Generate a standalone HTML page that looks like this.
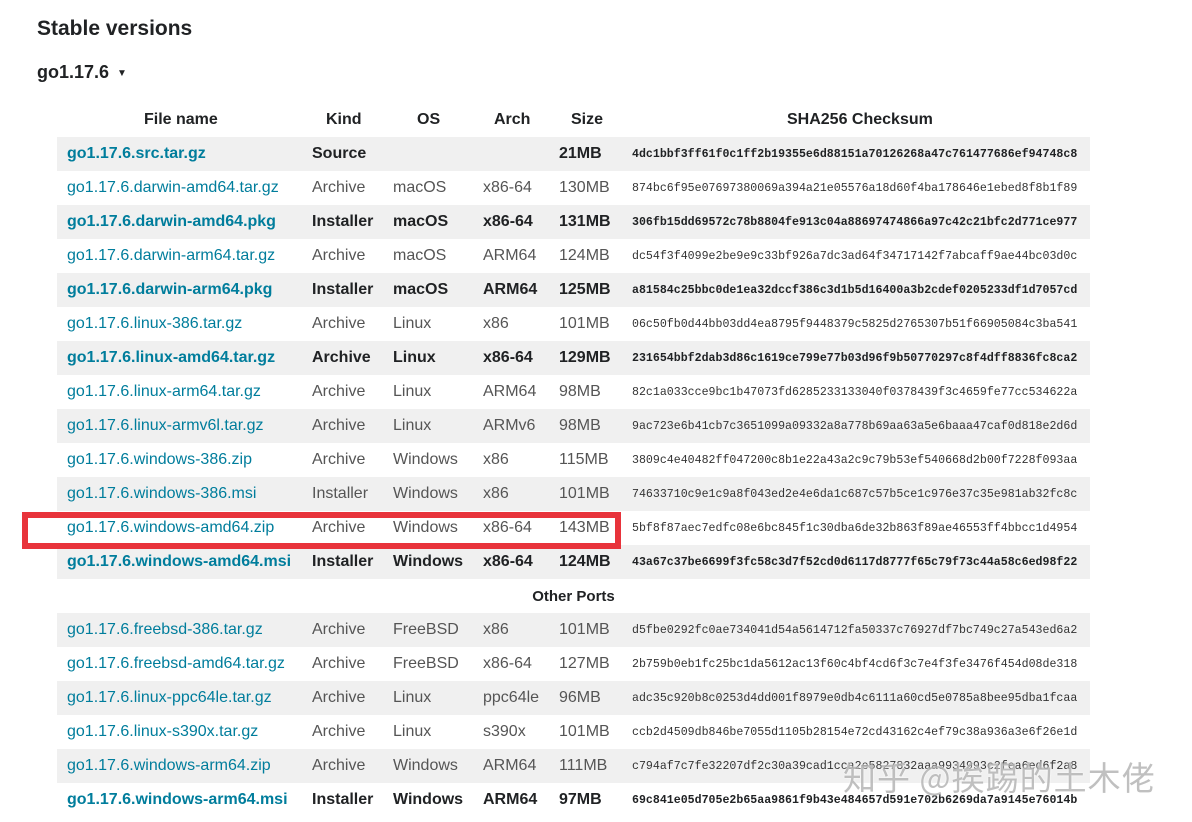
<!DOCTYPE html>
<html><head><meta charset="utf-8"><style>
body{margin:0;background:#fff;width:1192px;height:822px;overflow:hidden;position:relative;font-family:"Liberation Sans","DejaVu Sans",sans-serif;color:#202224}
h2{position:absolute;left:37px;top:17px;margin:0;font-size:21px;font-weight:bold;color:#202224}
h3{position:absolute;left:37px;top:62px;margin:0;font-size:18px;font-weight:bold}
h3 span{font-size:10px;margin-left:8px;vertical-align:2px}
table{position:absolute;left:57px;top:102px;border-collapse:collapse;width:1033px;table-layout:fixed}
td,th{height:34px;padding:0;font-size:16px;white-space:nowrap;overflow:visible}
th{font-weight:bold;text-align:left;color:#202224}
tr.h th{height:35px}
td{color:#555}
.f{padding-left:10px;width:245px}
td.f{color:#007d9c}
.k{width:81px}.o{width:90px}.a{width:76px}.s{width:73px}
td.c{font-family:"Liberation Mono",monospace;font-size:11.6px;color:#333}
tr.sh td{background:#f0f0f0}
tr.b td{font-weight:bold;color:#202224}
tr.b td.f{color:#007d9c}
tr.b td.c{color:#202224}
tr.op td{text-align:center;font-weight:bold;color:#202224;font-size:15px}
.red{position:absolute;left:22px;top:512px;width:587px;height:25px;border:6px solid #e8333b}
.wm{position:absolute;left:843px;top:752px;font-family:"Noto Sans CJK SC",sans-serif;font-size:33px;color:rgba(140,140,140,0.55);letter-spacing:1px;text-shadow:0 0 2px #fff}
</style></head><body>
<h2>Stable versions</h2>
<h3>go1.17.6<span>▼</span></h3>
<table>
<colgroup><col style="width:255px"><col style="width:81px"><col style="width:90px"><col style="width:76px"><col style="width:73px"><col></colgroup>
<tr class="h"><th style="padding-left:87px">File name</th><th style="padding-left:14px">Kind</th><th style="padding-left:24px">OS</th><th style="padding-left:11px">Arch</th><th style="padding-left:12px">Size</th><th style="padding-left:155px">SHA256 Checksum</th></tr>
<tr class="sh b"><td class="f">go1.17.6.src.tar.gz</td><td class="k">Source</td><td class="o"></td><td class="a"></td><td class="s">21MB</td><td class="c">4dc1bbf3ff61f0c1ff2b19355e6d88151a70126268a47c761477686ef94748c8</td></tr>
<tr><td class="f">go1.17.6.darwin-amd64.tar.gz</td><td class="k">Archive</td><td class="o">macOS</td><td class="a">x86-64</td><td class="s">130MB</td><td class="c">874bc6f95e07697380069a394a21e05576a18d60f4ba178646e1ebed8f8b1f89</td></tr>
<tr class="sh b"><td class="f">go1.17.6.darwin-amd64.pkg</td><td class="k">Installer</td><td class="o">macOS</td><td class="a">x86-64</td><td class="s">131MB</td><td class="c">306fb15dd69572c78b8804fe913c04a88697474866a97c42c21bfc2d771ce977</td></tr>
<tr><td class="f">go1.17.6.darwin-arm64.tar.gz</td><td class="k">Archive</td><td class="o">macOS</td><td class="a">ARM64</td><td class="s">124MB</td><td class="c">dc54f3f4099e2be9e9c33bf926a7dc3ad64f34717142f7abcaff9ae44bc03d0c</td></tr>
<tr class="sh b"><td class="f">go1.17.6.darwin-arm64.pkg</td><td class="k">Installer</td><td class="o">macOS</td><td class="a">ARM64</td><td class="s">125MB</td><td class="c">a81584c25bbc0de1ea32dccf386c3d1b5d16400a3b2cdef0205233df1d7057cd</td></tr>
<tr><td class="f">go1.17.6.linux-386.tar.gz</td><td class="k">Archive</td><td class="o">Linux</td><td class="a">x86</td><td class="s">101MB</td><td class="c">06c50fb0d44bb03dd4ea8795f9448379c5825d2765307b51f66905084c3ba541</td></tr>
<tr class="sh b"><td class="f">go1.17.6.linux-amd64.tar.gz</td><td class="k">Archive</td><td class="o">Linux</td><td class="a">x86-64</td><td class="s">129MB</td><td class="c">231654bbf2dab3d86c1619ce799e77b03d96f9b50770297c8f4dff8836fc8ca2</td></tr>
<tr><td class="f">go1.17.6.linux-arm64.tar.gz</td><td class="k">Archive</td><td class="o">Linux</td><td class="a">ARM64</td><td class="s">98MB</td><td class="c">82c1a033cce9bc1b47073fd6285233133040f0378439f3c4659fe77cc534622a</td></tr>
<tr class="sh"><td class="f">go1.17.6.linux-armv6l.tar.gz</td><td class="k">Archive</td><td class="o">Linux</td><td class="a">ARMv6</td><td class="s">98MB</td><td class="c">9ac723e6b41cb7c3651099a09332a8a778b69aa63a5e6baaa47caf0d818e2d6d</td></tr>
<tr><td class="f">go1.17.6.windows-386.zip</td><td class="k">Archive</td><td class="o">Windows</td><td class="a">x86</td><td class="s">115MB</td><td class="c">3809c4e40482ff047200c8b1e22a43a2c9c79b53ef540668d2b00f7228f093aa</td></tr>
<tr class="sh"><td class="f">go1.17.6.windows-386.msi</td><td class="k">Installer</td><td class="o">Windows</td><td class="a">x86</td><td class="s">101MB</td><td class="c">74633710c9e1c9a8f043ed2e4e6da1c687c57b5ce1c976e37c35e981ab32fc8c</td></tr>
<tr><td class="f">go1.17.6.windows-amd64.zip</td><td class="k">Archive</td><td class="o">Windows</td><td class="a">x86-64</td><td class="s">143MB</td><td class="c">5bf8f87aec7edfc08e6bc845f1c30dba6de32b863f89ae46553ff4bbcc1d4954</td></tr>
<tr class="sh b"><td class="f">go1.17.6.windows-amd64.msi</td><td class="k">Installer</td><td class="o">Windows</td><td class="a">x86-64</td><td class="s">124MB</td><td class="c">43a67c37be6699f3fc58c3d7f52cd0d6117d8777f65c79f73c44a58c6ed98f22</td></tr>
<tr class="op"><td colspan="6">Other Ports</td></tr>
<tr class="sh"><td class="f">go1.17.6.freebsd-386.tar.gz</td><td class="k">Archive</td><td class="o">FreeBSD</td><td class="a">x86</td><td class="s">101MB</td><td class="c">d5fbe0292fc0ae734041d54a5614712fa50337c76927df7bc749c27a543ed6a2</td></tr>
<tr><td class="f">go1.17.6.freebsd-amd64.tar.gz</td><td class="k">Archive</td><td class="o">FreeBSD</td><td class="a">x86-64</td><td class="s">127MB</td><td class="c">2b759b0eb1fc25bc1da5612ac13f60c4bf4cd6f3c7e4f3fe3476f454d08de318</td></tr>
<tr class="sh"><td class="f">go1.17.6.linux-ppc64le.tar.gz</td><td class="k">Archive</td><td class="o">Linux</td><td class="a">ppc64le</td><td class="s">96MB</td><td class="c">adc35c920b8c0253d4dd001f8979e0db4c6111a60cd5e0785a8bee95dba1fcaa</td></tr>
<tr><td class="f">go1.17.6.linux-s390x.tar.gz</td><td class="k">Archive</td><td class="o">Linux</td><td class="a">s390x</td><td class="s">101MB</td><td class="c">ccb2d4509db846be7055d1105b28154e72cd43162c4ef79c38a936a3e6f26e1d</td></tr>
<tr class="sh"><td class="f">go1.17.6.windows-arm64.zip</td><td class="k">Archive</td><td class="o">Windows</td><td class="a">ARM64</td><td class="s">111MB</td><td class="c">c794af7c7fe32207df2c30a39cad1cca2e5827832aaa9934993c2fea6ed6f2a8</td></tr>
<tr class="b"><td class="f">go1.17.6.windows-arm64.msi</td><td class="k">Installer</td><td class="o">Windows</td><td class="a">ARM64</td><td class="s">97MB</td><td class="c">69c841e05d705e2b65aa9861f9b43e484657d591e702b6269da7a9145e76014b</td></tr>
</table>
<div class="red"></div>
<div class="wm">知乎 @挨踢的土木佬</div>
</body></html>
